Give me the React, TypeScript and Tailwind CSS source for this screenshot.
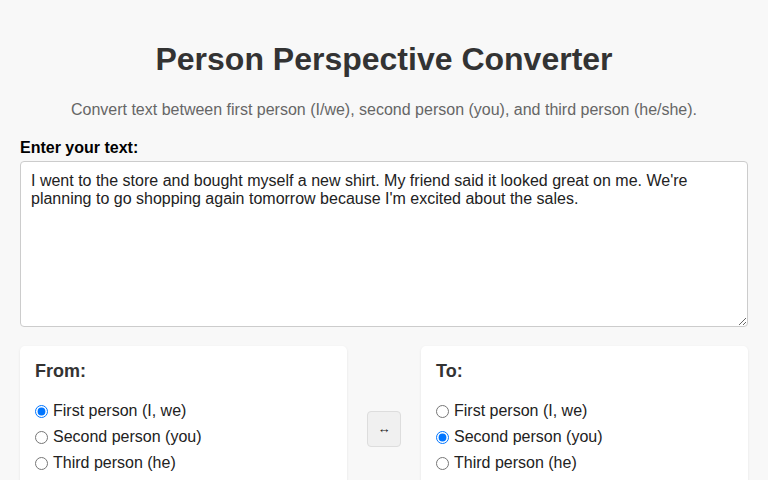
import { useState } from "react";

const options = [
  { value: "first", label: "First person (I, we)" },
  { value: "second", label: "Second person (you)" },
  { value: "third", label: "Third person (he)" },
];

function PerspectiveCard({
  title,
  name,
  value,
  onChange,
}: {
  title: string;
  name: string;
  value: string;
  onChange: (v: string) => void;
}) {
  return (
    <div className="flex-1 bg-white rounded-[5px] shadow-[0_1px_3px_rgba(0,0,0,0.08)] p-[15px]">
      <h3 className="text-[18px] font-bold text-[#333] leading-[21px] mb-[16px]">
        {title}
      </h3>
      <div className="flex flex-col">
        {options.map((o) => (
          <label
            key={o.value}
            className="flex items-center h-[26px] text-[16px] text-[#222]"
          >
            <input
              type="radio"
              name={name}
              checked={value === o.value}
              onChange={() => onChange(o.value)}
              className="m-0 mr-[5px] w-[13px] h-[13px]"
            />
            {o.label}
          </label>
        ))}
      </div>
    </div>
  );
}

export default function App() {
  const [text, setText] = useState(
    "I went to the store and bought myself a new shirt. My friend said it looked great on me. We're planning to go shopping again tomorrow because I'm excited about the sales."
  );
  const [from, setFrom] = useState("first");
  const [to, setTo] = useState("second");

  return (
    <div
      className="min-h-screen bg-[#f8f8f8] p-5"
      style={{ fontFamily: '"Liberation Sans", Arial, sans-serif' }}
    >
      <h1 className="text-[32px] font-bold text-[#333] text-center leading-[37px] mt-[21px]">
        Person Perspective Converter
      </h1>
      <p className="text-[16px] text-[#666] text-center leading-[18px] mt-[23px]">
        Convert text between first person (I/we), second person (you), and third person (he/she).
      </p>

      <label className="block font-bold text-[16px] text-black leading-[18px] mt-[20px] mb-[4px]">
        Enter your text:
      </label>
      <textarea
        value={text}
        onChange={(e) => setText(e.target.value)}
        className="block w-full h-[166px] bg-white border border-[#ccc] rounded-[4px] px-[10px] py-[10px] text-[16px] leading-[18px] text-[#222] resize-y"
        style={{ fontFamily: '"Liberation Sans", Arial, sans-serif' }}
      />

      <div className="flex items-start gap-5 mt-[19px]">
        <PerspectiveCard title="From:" name="from" value={from} onChange={setFrom} />
        <button
          onClick={() => {
            setFrom(to);
            setTo(from);
          }}
          className="w-[34px] h-[36px] bg-[#f0f0f0] border border-[#ddd] rounded-[4px] text-[13px] text-[#222] flex items-center justify-center mt-[65px]"
        >
          ↔
        </button>
        <PerspectiveCard title="To:" name="to" value={to} onChange={setTo} />
      </div>
    </div>
  );
}
